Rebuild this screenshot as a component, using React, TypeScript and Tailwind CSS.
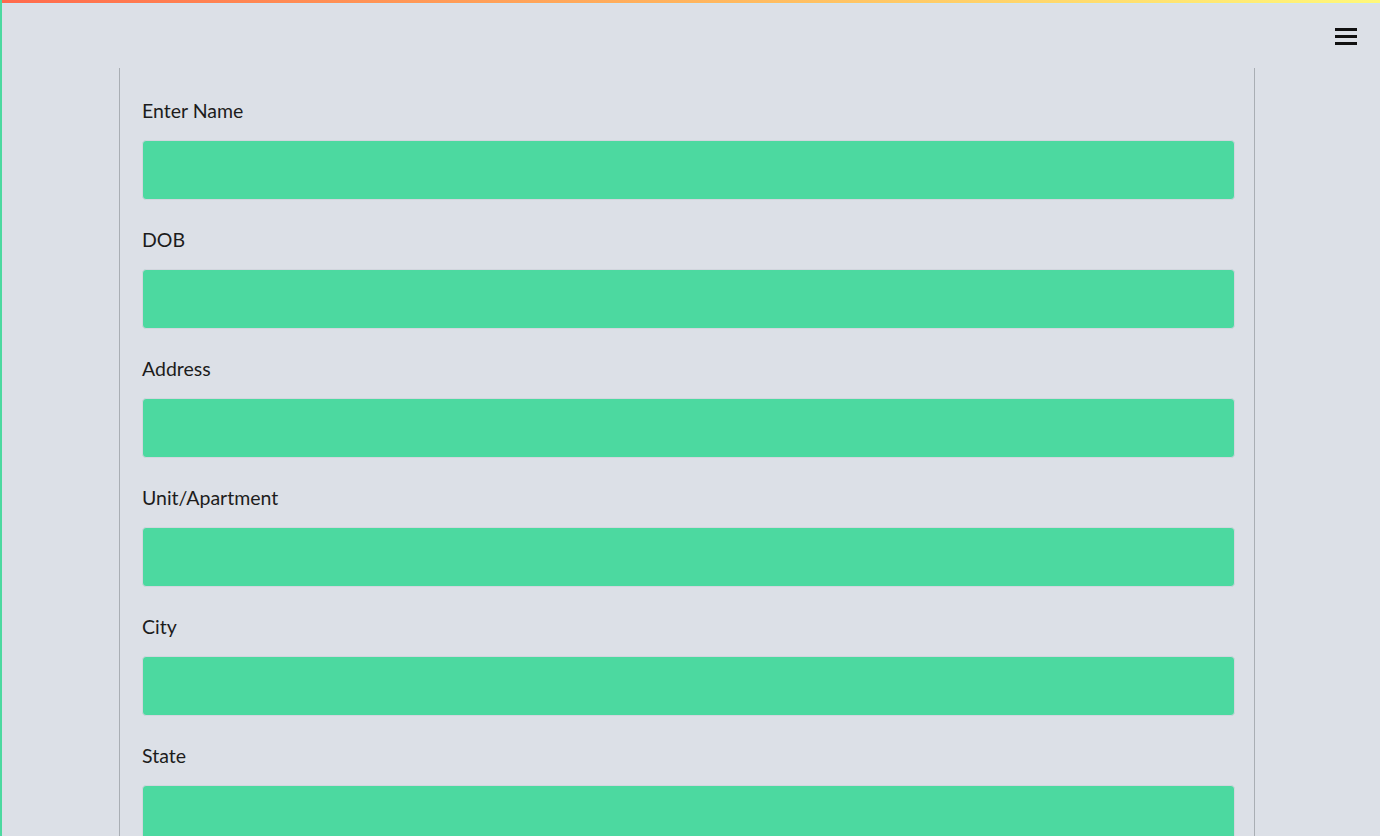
const fields = ['Enter Name', 'DOB', 'Address', 'Unit/Apartment', 'City', 'State'];

export default function App() {
  return (
    <div
      className="min-h-screen h-[836px] overflow-hidden bg-[#dce0e7] border-l-2 border-[#4cd9a0] flex flex-col"
      style={{ fontFamily: 'Lato, "Open Sans", sans-serif' }}
    >
      {/* top accent bar */}
      <div className="h-[3px] shrink-0 bg-gradient-to-r from-[#ff6a4d] via-[#ffb45e] to-[#fff87a]" />
      <div className="h-px shrink-0 bg-[#cfe6f3]" />

      <header className="h-[64px] shrink-0 flex items-center justify-end pr-[23px]">
        <button className="w-[22px] flex flex-col gap-[4px]" aria-label="menu">
          <span className="block h-[3px] bg-[#111]" />
          <span className="block h-[3px] bg-[#111]" />
          <span className="block h-[3px] bg-[#111]" />
        </button>
      </header>

      <div className="flex-1 ml-[117px] w-[1136px] border-x border-[#a9aeb4] pt-[29px] pl-[22px] pr-[19px]">
        {fields.map((f) => (
          <div key={f} className="mb-[26px]">
            <label className="block text-[19.5px] leading-[28px] text-[#1c1c1c] mb-[15px]">{f}</label>
            <input
              type="text"
              className="block w-full h-[60px] rounded-[4px] bg-[#4cd9a0] border border-[#d2d6de] outline-none"
            />
          </div>
        ))}
      </div>
    </div>
  );
}
